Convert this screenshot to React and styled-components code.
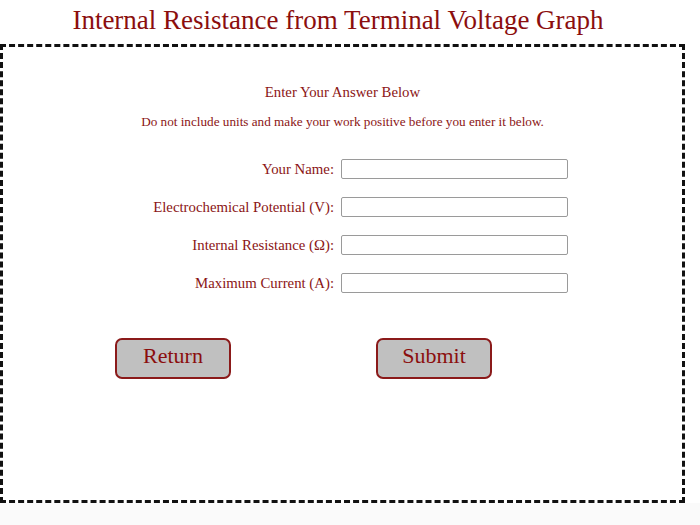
import React from "react";
import styled, { createGlobalStyle } from "styled-components";

const GlobalStyle = createGlobalStyle`
  html, body {
    margin: 0;
    padding: 0;
    background-color: #fafafa;
  }
  body {
    font-family: "Liberation Serif", "DejaVu Serif", serif;
  }
`;

const Page = styled.div`
  background-color: #ffffff;
  color: #8b1515;
`;

const Title = styled.h1`
  width: 685px;
  margin: 0;
  padding: 4px 9px 0 0;
  box-sizing: border-box;
  height: 44px;
  text-align: center;
  font-size: 27px;
  font-weight: normal;
  line-height: 32px;
  color: #8b0e0e;
`;

const Panel = styled.div`
  box-sizing: border-box;
  width: 685px;
  height: 459px;
  border: 3px dashed #111;
  padding-top: 36px;
`;

const Heading = styled.p`
  margin: 0;
  text-align: center;
  font-size: 14.8px;
  line-height: 18px;
`;

const Note = styled.p`
  margin: 12px 0 0;
  text-align: center;
  font-size: 13.2px;
  line-height: 18px;
`;

const Form = styled.form`
  display: grid;
  grid-template-columns: 331px 1fr;
  column-gap: 7px;
  row-gap: 18px;
  margin-top: 28px;
  align-items: center;
`;

const Label = styled.label`
  text-align: right;
  font-size: 14.8px;
  line-height: 20px;
`;

const Input = styled.input`
  box-sizing: border-box;
  width: 227px;
  height: 20px;
  margin: 0;
  padding: 1px 4px;
  border: 1px solid #9a9a9a;
  border-radius: 2px;
  background: #fff;
  font-family: inherit;
  font-size: 13px;
`;

const ButtonRow = styled.div`
  display: flex;
  gap: 145px;
  margin: 45px 0 0 112px;
`;

const Button = styled.button`
  box-sizing: border-box;
  width: 116px;
  height: 41px;
  padding: 0 0 5px;
  border: 2px solid #8b1a1a;
  border-radius: 7px;
  background-color: #c0c0c0;
  color: #8b0e0e;
  font-family: inherit;
  font-size: 22px;
  cursor: pointer;
`;

const fields = [
  { id: "name", label: "Your Name:" },
  { id: "emf", label: "Electrochemical Potential (V):" },
  { id: "resistance", label: "Internal Resistance (\u03A9):" },
  { id: "current", label: "Maximum Current (A):" },
];

const App = () => {
  return (
    <>
      <GlobalStyle />
      <Page>
        <Title>Internal Resistance from Terminal Voltage Graph</Title>
        <Panel>
          <Heading>Enter Your Answer Below</Heading>
          <Note>Do not include units and make your work positive before you enter it below.</Note>
          <Form onSubmit={(e) => e.preventDefault()}>
            {fields.map((f) => (
              <React.Fragment key={f.id}>
                <Label htmlFor={f.id}>{f.label}</Label>
                <Input id={f.id} type="text" />
              </React.Fragment>
            ))}
          </Form>
          <ButtonRow>
            <Button type="button">Return</Button>
            <Button type="submit">Submit</Button>
          </ButtonRow>
        </Panel>
      </Page>
    </>
  );
};

export default App;
